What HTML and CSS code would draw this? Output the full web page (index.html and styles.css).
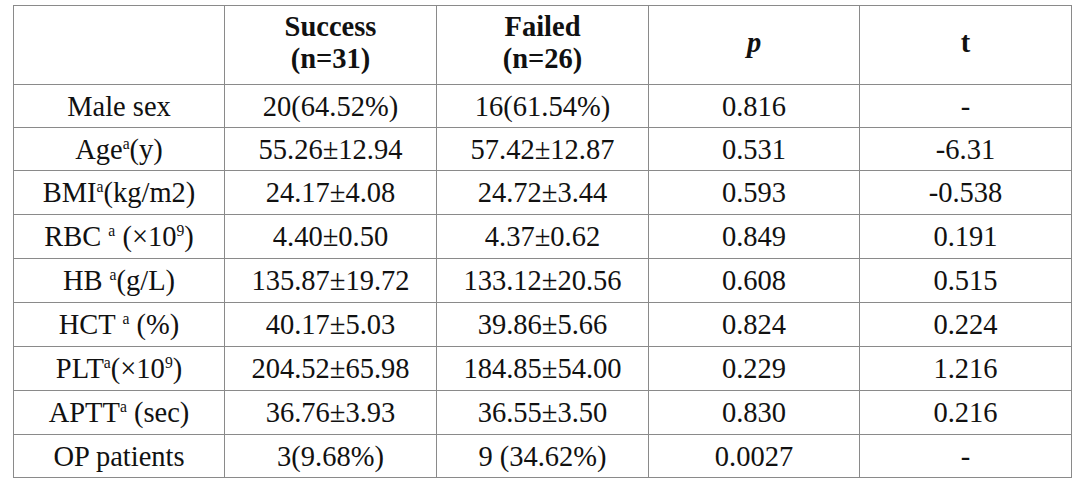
FILE: index.html
```html
<!DOCTYPE html>
<html>
<head>
<meta charset="utf-8">
<link rel="stylesheet" href="styles.css">
</head>
<body>
<div class="tbl">
  <div class="c h1"><span></span></div>
  <div class="c h1"><span>Success<br>(n=31)</span></div>
  <div class="c h1"><span>Failed<br>(n=26)</span></div>
  <div class="c h1"><span><i>p</i></span></div>
  <div class="c h1"><span>t</span></div>

  <div class="c r43"><span>Male sex</span></div><div class="c r43"><span>20(64.52%)</span></div><div class="c r43"><span>16(61.54%)</span></div><div class="c r43"><span>0.816</span></div><div class="c r43"><span>-</span></div>
  <div class="c r43"><span>Age<sup>a</sup>(y)</span></div><div class="c r43"><span>55.26±12.94</span></div><div class="c r43"><span>57.42±12.87</span></div><div class="c r43"><span>0.531</span></div><div class="c r43"><span>-6.31</span></div>
  <div class="c"><span>BMI<sup>a</sup>(kg/m2)</span></div><div class="c"><span>24.17±4.08</span></div><div class="c"><span>24.72±3.44</span></div><div class="c"><span>0.593</span></div><div class="c"><span>-0.538</span></div>
  <div class="c"><span>RBC <sup>a</sup> (×10<sup>9</sup>)</span></div><div class="c"><span>4.40±0.50</span></div><div class="c"><span>4.37±0.62</span></div><div class="c"><span>0.849</span></div><div class="c"><span>0.191</span></div>
  <div class="c"><span>HB <sup>a</sup>(g/L)</span></div><div class="c"><span>135.87±19.72</span></div><div class="c"><span>133.12±20.56</span></div><div class="c"><span>0.608</span></div><div class="c"><span>0.515</span></div>
  <div class="c"><span>HCT <sup>a</sup> (%)</span></div><div class="c"><span>40.17±5.03</span></div><div class="c"><span>39.86±5.66</span></div><div class="c"><span>0.824</span></div><div class="c"><span>0.224</span></div>
  <div class="c"><span>PLT<sup>a</sup>(×10<sup>9</sup>)</span></div><div class="c"><span>204.52±65.98</span></div><div class="c"><span>184.85±54.00</span></div><div class="c"><span>0.229</span></div><div class="c"><span>1.216</span></div>
  <div class="c"><span>APTT<sup>a</sup> (sec)</span></div><div class="c"><span>36.76±3.93</span></div><div class="c"><span>36.55±3.50</span></div><div class="c"><span>0.830</span></div><div class="c"><span>0.216</span></div>
  <div class="c r43"><span>OP patients</span></div><div class="c r43"><span>3(9.68%)</span></div><div class="c r43"><span>9 (34.62%)</span></div><div class="c r43"><span>0.0027</span></div><div class="c r43"><span>-</span></div>
</div>
</body>
</html>
```
FILE: styles.css
```css
html, body {
  margin: 0;
  padding: 0;
  background: #ffffff;
}
body {
  padding: 5px 0 0 13px;
  font-family: "Liberation Serif", "Times New Roman", serif;
  color: #111111;
}
.tbl {
  display: grid;
  grid-template-columns: 211px 212px 212px 211px 212px;
  width: max-content;
  border-left: 1px solid #8a8a8a;
  border-top: 1px solid #8a8a8a;
}
.c {
  box-sizing: border-box;
  height: 44px;
  border-right: 1px solid #8a8a8a;
  border-bottom: 1px solid #8a8a8a;
  display: flex;
  align-items: center;
  justify-content: center;
  text-align: center;
  font-size: 28.5px;
  line-height: 32px;
  padding-top: 1px;
}
.c span {
  display: block;
  white-space: nowrap;
}
.r43 {
  height: 43px;
}
.h1 {
  height: 79px;
  font-weight: bold;
  padding-top: 0;
  padding-bottom: 5px;
}
.c sup {
  font-size: 0.55em;
  line-height: 0;
  vertical-align: 0.62em;
}
```
